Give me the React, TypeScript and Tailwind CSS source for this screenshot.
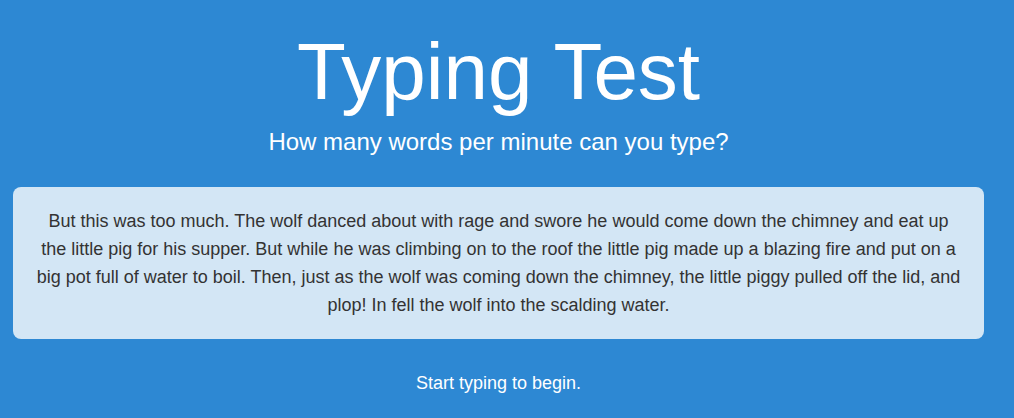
import * as React from 'react'

const passage =
  'But this was too much. The wolf danced about with rage and swore he would come down the chimney and eat up the little pig for his supper. But while he was climbing on to the roof the little pig made up a blazing fire and put on a big pot full of water to boil. Then, just as the wolf was coming down the chimney, the little piggy pulled off the lid, and plop! In fell the wolf into the scalding water.'

export default function App() {
  return (
    <div className="min-h-[418px] w-full bg-[#2d88d3] font-['Liberation_Sans',Arial,sans-serif] text-white">
      <div className="w-[997px]">
        <header className="flex flex-col items-center pt-[26px]">
          <h1 className="text-[80px] leading-[92px]">Typing Test</h1>
          <p className="mt-[9px] text-[24px] leading-[30px]">How many words per minute can you type?</p>
        </header>

        <div className="mx-[13px] mt-[30px] rounded-[8px] bg-[#d3e6f5] px-[21px] py-[20px] text-center text-[18px] leading-[28px] text-[#333]">
          {passage}
        </div>

        <p className="mt-[32px] text-center text-[18px] leading-[24px]">Start typing to begin.</p>
      </div>
    </div>
  )
}
